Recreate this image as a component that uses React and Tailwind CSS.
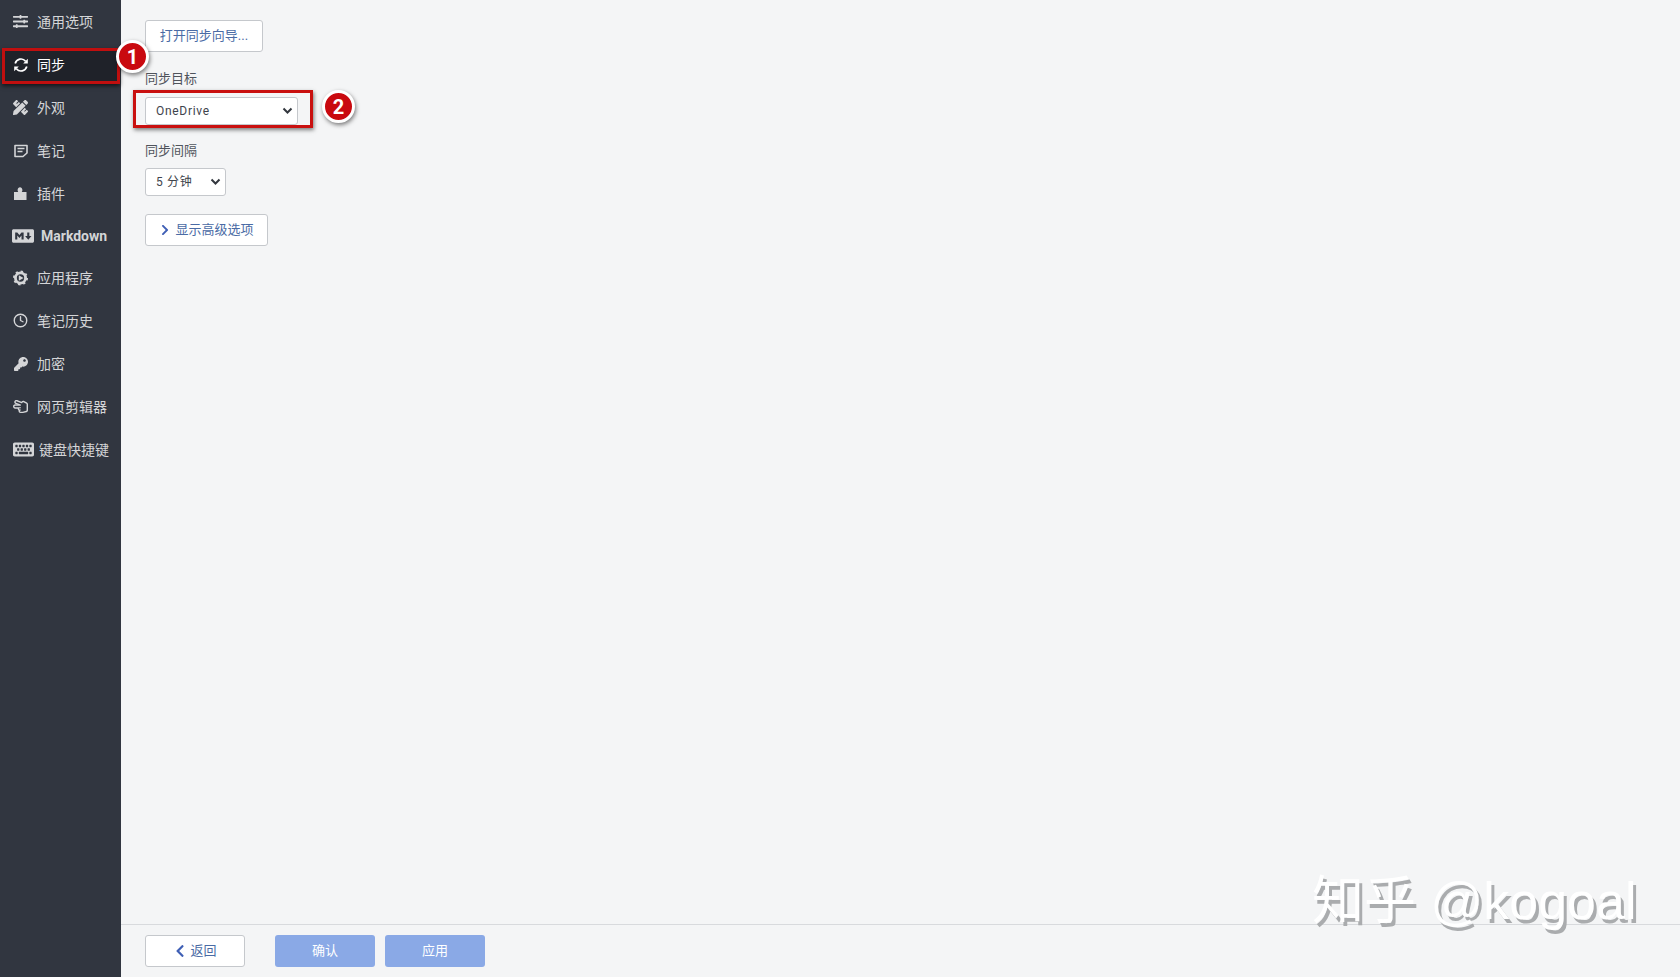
import React from "react";
import { FaSlidersH, FaPencilRuler, FaMarkdown, FaKey, FaRegHandScissors, FaKeyboard, FaChevronRight, FaChevronLeft } from "react-icons/fa";
import { FiClock } from "react-icons/fi";

const font = { fontFamily: '"Roboto", "Noto Sans CJK SC", sans-serif' };

// gear with a play triangle inside
function AppIcon() {
  return (
    <svg width="16" height="16" viewBox="0 0 16 16">
      <circle cx="8" cy="8" r="5.4" fill="none" stroke="currentColor" strokeWidth="3" />
      <circle cx="8" cy="8" r="7" fill="none" stroke="currentColor" strokeWidth="2" strokeDasharray="2.4 3.1" />
      <path d="M6.2 5 L11.2 8 L6.2 11 Z" fill="currentColor" />
    </svg>
  );
}

function NoteIcon() {
  return (
    <svg width="14" height="14" viewBox="0 0 14 14" fill="none" stroke="currentColor" strokeWidth="1.6">
      <path d="M1 1.5 H13 V9 L9 12.5 H1 Z" strokeLinejoin="round" />
      <path d="M3.5 4.5 H10.5 M3.5 7.5 H8.5" />
    </svg>
  );
}

function PluginIcon() {
  return (
    <svg width="15" height="15" viewBox="0 0 15 15" fill="currentColor">
      <path d="M1 6 H5.2 C5 5.4 4.6 5 4.6 4 C4.6 2.6 5.8 1.2 7 1.2 C8.2 1.2 9.4 2.6 9.4 4 C9.4 5 9 5.4 8.8 6 H13.5 V14 H1 Z" />
    </svg>
  );
}

function SyncIcon() {
  return (
    <svg width="16" height="16" viewBox="0 0 16 16" fill="none" stroke="currentColor" strokeWidth="1.7">
      <path d="M2.2 6.4 A6 6 0 0 1 12.6 4.2" />
      <path d="M13.8 9.6 A6 6 0 0 1 3.4 11.8" />
      <path d="M14.8 1.8 V6.4 H10.2 Z" fill="currentColor" stroke="none" />
      <path d="M1.2 14.2 V9.6 H5.8 Z" fill="currentColor" stroke="none" />
    </svg>
  );
}

const items = [
  { label: "通用选项", icon: <FaSlidersH size={15} /> },
  { label: "同步", icon: <SyncIcon />, active: true },
  { label: "外观", icon: <FaPencilRuler size={15} /> },
  { label: "笔记", icon: <NoteIcon /> },
  { label: "插件", icon: <PluginIcon /> },
  { label: "Markdown", icon: <FaMarkdown size={22} />, wide: true, bold: true },
  { label: "应用程序", icon: <AppIcon /> },
  { label: "笔记历史", icon: <FiClock size={15} strokeWidth={2.2} /> },
  { label: "加密", icon: <FaKey size={14} /> },
  { label: "网页剪辑器", icon: <FaRegHandScissors size={17} /> },
  { label: "键盘快捷键", icon: <FaKeyboard size={21} />, wide: true },
];

function SideItem({ item }) {
  if (item.active) {
    return (
      <div className="flex h-[43px] items-center pl-[2px] pr-[1px]">
        <div className="flex h-[36px] w-full items-center border-[3px] border-[#c00f0f] bg-[#1f2229] pl-[8px] text-white shadow-[0_2px_4px_rgba(0,0,0,0.6)]">
          <span className="-mt-[2px] flex w-[16px] justify-center">{item.icon}</span>
          <span className="ml-[8px] text-[14px]">{item.label}</span>
        </div>
      </div>
    );
  }
  return (
    <div className={"flex items-center text-[#d4d5d7] " + (item.bold ? "h-[41px] " : "h-[43px] ") + (item.wide ? "pl-[12px]" : "pl-[13px]")}>
      <span className={"-mt-[2px] flex justify-center " + (item.wide ? "w-[22px]" : "w-[15px]")}>{item.icon}</span>
      <span className={(item.bold ? "ml-[7px] text-[14px] font-bold" : item.wide ? "ml-[5px] text-[14px]" : "ml-[9px] text-[14px]")}>{item.label}</span>
    </div>
  );
}

function Badge({ n, className }) {
  return (
    <div className={"absolute flex h-[33px] w-[33px] items-center justify-center rounded-full border-[3px] border-white bg-[#c9090f] text-[20px] font-bold text-white shadow-[1px_2px_4px_rgba(0,0,0,0.5)] " + className}>
      {n}
    </div>
  );
}

function Chevron() {
  return (
    <svg width="11" height="8" viewBox="0 0 11 8" className="text-[#33373e]">
      <path d="M1.5 1.5 L5.5 5.5 L9.5 1.5" fill="none" stroke="currentColor" strokeWidth="2" />
    </svg>
  );
}

export default function App() {
  return (
    <div className="relative flex h-[977px] w-[1680px] overflow-hidden bg-[#f4f5f6]" style={font}>
      <aside className="w-[121px] shrink-0 bg-[#313640] pt-[1px]">
        {items.map((it) => (
          <SideItem key={it.label} item={it} />
        ))}
      </aside>

      <main className="flex flex-1 flex-col">
        <div className="flex-1 pl-[24px] pt-[20px]">
          <button className="h-[32px] w-[118px] rounded-[3px] border border-[#c5c8cc] bg-white text-[13px] text-[#4a6ba5]">打开同步向导...</button>

          <div className="mt-[19px] text-[13px] leading-[16px] text-[#50545c]">同步目标</div>
          <div className="mt-[10px] flex h-[28px] w-[153px] items-center justify-between rounded-[3px] border border-[#c5c8cc] bg-white pl-[10px] pr-[4px] text-[12px] tracking-[0.7px] text-[#40444c]">
            <span>OneDrive</span>
            <Chevron />
          </div>

          <div className="mt-[18px] text-[13px] leading-[16px] text-[#50545c]">同步间隔</div>
          <div className="mt-[9px] flex h-[28px] w-[81px] items-center justify-between rounded-[3px] border border-[#c5c8cc] bg-white pl-[10px] pr-[4px] text-[12px] tracking-[0.7px] text-[#40444c]">
            <span>5 分钟</span>
            <Chevron />
          </div>

          <button className="mt-[18px] flex h-[32px] w-[123px] items-center justify-center rounded-[3px] border border-[#c5c8cc] bg-white text-[13px] text-[#4a6ba5]">
            <FaChevronRight size={12} className="mr-[4px] text-[#3f5fb5]" />
            显示高级选项
          </button>
        </div>

        <footer className="flex h-[53px] items-center border-t border-[#d8dadd] pl-[24px]">
          <button className="flex h-[32px] w-[100px] items-center justify-center rounded-[3px] border border-[#c5c8cc] bg-white text-[13px] text-[#4a6ba5]">
            <FaChevronLeft size={14} className="mr-[3px] text-[#3f5fb5]" />
            返回
          </button>
          <button className="ml-[30px] h-[32px] w-[100px] rounded-[3px] bg-[#8aa9e6] text-[13px] text-white">确认</button>
          <button className="ml-[10px] h-[32px] w-[100px] rounded-[3px] bg-[#8aa9e6] text-[13px] text-white">应用</button>
        </footer>
      </main>

      {/* annotations on top of the screenshot */}
      <div className="absolute left-[133px] top-[90px] h-[38px] w-[180px] border-[3px] border-[#c9100f] shadow-[1px_2px_4px_rgba(0,0,0,0.5)]" />
      <Badge n="1" className="left-[116px] top-[40px]" />
      <Badge n="2" className="left-[322px] top-[90px]" />

      <div className="absolute left-[1312px] top-[871px] whitespace-nowrap text-[52px] leading-[60px] text-white [text-shadow:3px_4px_0_#aaacae]" style={{ fontFamily: '"Liberation Sans", "Noto Sans CJK SC", sans-serif' }}>
        知乎 @kogoal
      </div>
    </div>
  );
}
